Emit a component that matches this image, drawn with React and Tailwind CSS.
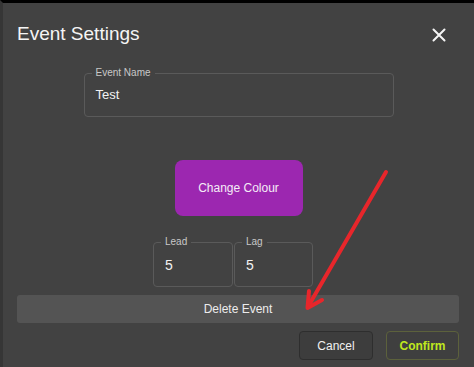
const OutlinedField = ({ label, value, className, labelLeft, textSize, padTop }) => (
  <div className={`relative rounded-[4px] border border-[#5a5a5a] ${className}`}>
    <span
      className={`absolute -top-[7px] ${labelLeft} bg-[#424242] px-1 text-[10px] leading-[12px] text-[#c8c8c8]`}
    >
      {label}
    </span>
    <div className={`pl-[11px] ${padTop} ${textSize} leading-[16px] text-[#f2f2f2]`}>{value}</div>
  </div>
);

const App = () => {
  return (
    <div
      className="relative flex h-[367px] w-[474px] flex-col overflow-hidden border-t-[3px] border-l-[3px] border-t-black border-l-[#363636] bg-[#424242]"
      style={{ fontFamily: '"Liberation Sans", Arial, sans-serif' }}
    >
      {/* Header */}
      <div className="flex items-center justify-between pt-[19px] pl-[14px] pr-[28px]">
        <h2 className="text-[19px] leading-[24px] text-[#f5f5f5]">Event Settings</h2>
        <svg width="14" height="14" viewBox="0 0 14 14" className="mt-[1px]">
          <path d="M1.5 1.5 L12.5 12.5 M12.5 1.5 L1.5 12.5" stroke="#f5f5f5" strokeWidth="2" strokeLinecap="round" />
        </svg>
      </div>

      {/* Event name */}
      <OutlinedField
        label="Event Name"
        value="Test"
        className="mx-auto mt-[27px] h-[44px] w-[310px]"
        labelLeft="left-[7px]"
        textSize="text-[13px]"
        padTop="pt-[13px]"
      />

      {/* Colour */}
      <button className="mx-auto mt-[43px] flex h-[56px] w-[128px] items-center justify-center rounded-[8px] bg-[#9c27b0] text-[12px] text-[#f5ecf7]">
        Change Colour
      </button>

      {/* Lead / Lag */}
      <div className="mt-[26px] ml-[150px] flex gap-[1px]">
        <OutlinedField
          label="Lead"
          value="5"
          className="h-[45px] w-[80px]"
          labelLeft="left-[7px]"
          textSize="text-[14px]"
          padTop="pt-[14px]"
        />
        <OutlinedField
          label="Lag"
          value="5"
          className="h-[45px] w-[79px]"
          labelLeft="left-[7px]"
          textSize="text-[14px]"
          padTop="pt-[14px]"
        />
      </div>

      {/* Delete */}
      <button className="mt-[8px] ml-[14px] mr-[15px] flex h-[28px] items-center justify-center rounded-[3px] bg-[#545454] text-[12px] text-[#ececec]">
        Delete Event
      </button>

      {/* Actions */}
      <div className="mt-[8px] flex justify-end gap-[13px] pr-[15px]">
        <button className="h-[29px] w-[74px] rounded-[4px] border border-[#2e2e2e] bg-[#3d3d3d] text-[12px] text-[#f0f0f0]">
          Cancel
        </button>
        <button className="h-[29px] w-[73px] rounded-[4px] border border-[#5c613c] bg-[#3f3f3f] text-[12px] font-bold text-[#c0e81e]">
          Confirm
        </button>
      </div>

      {/* Annotation arrow */}
      <svg className="pointer-events-none absolute -top-[3px] -left-[3px]" width="474" height="367" viewBox="0 0 474 367">
        <path d="M386 172 L309 305" stroke="#e8262b" strokeWidth="4" strokeLinecap="round" fill="none" />
        <path d="M309 291 L307.5 308 L322 300" stroke="#e8262b" strokeWidth="4" strokeLinecap="round" strokeLinejoin="round" fill="none" />
      </svg>
    </div>
  );
};

export default App;
